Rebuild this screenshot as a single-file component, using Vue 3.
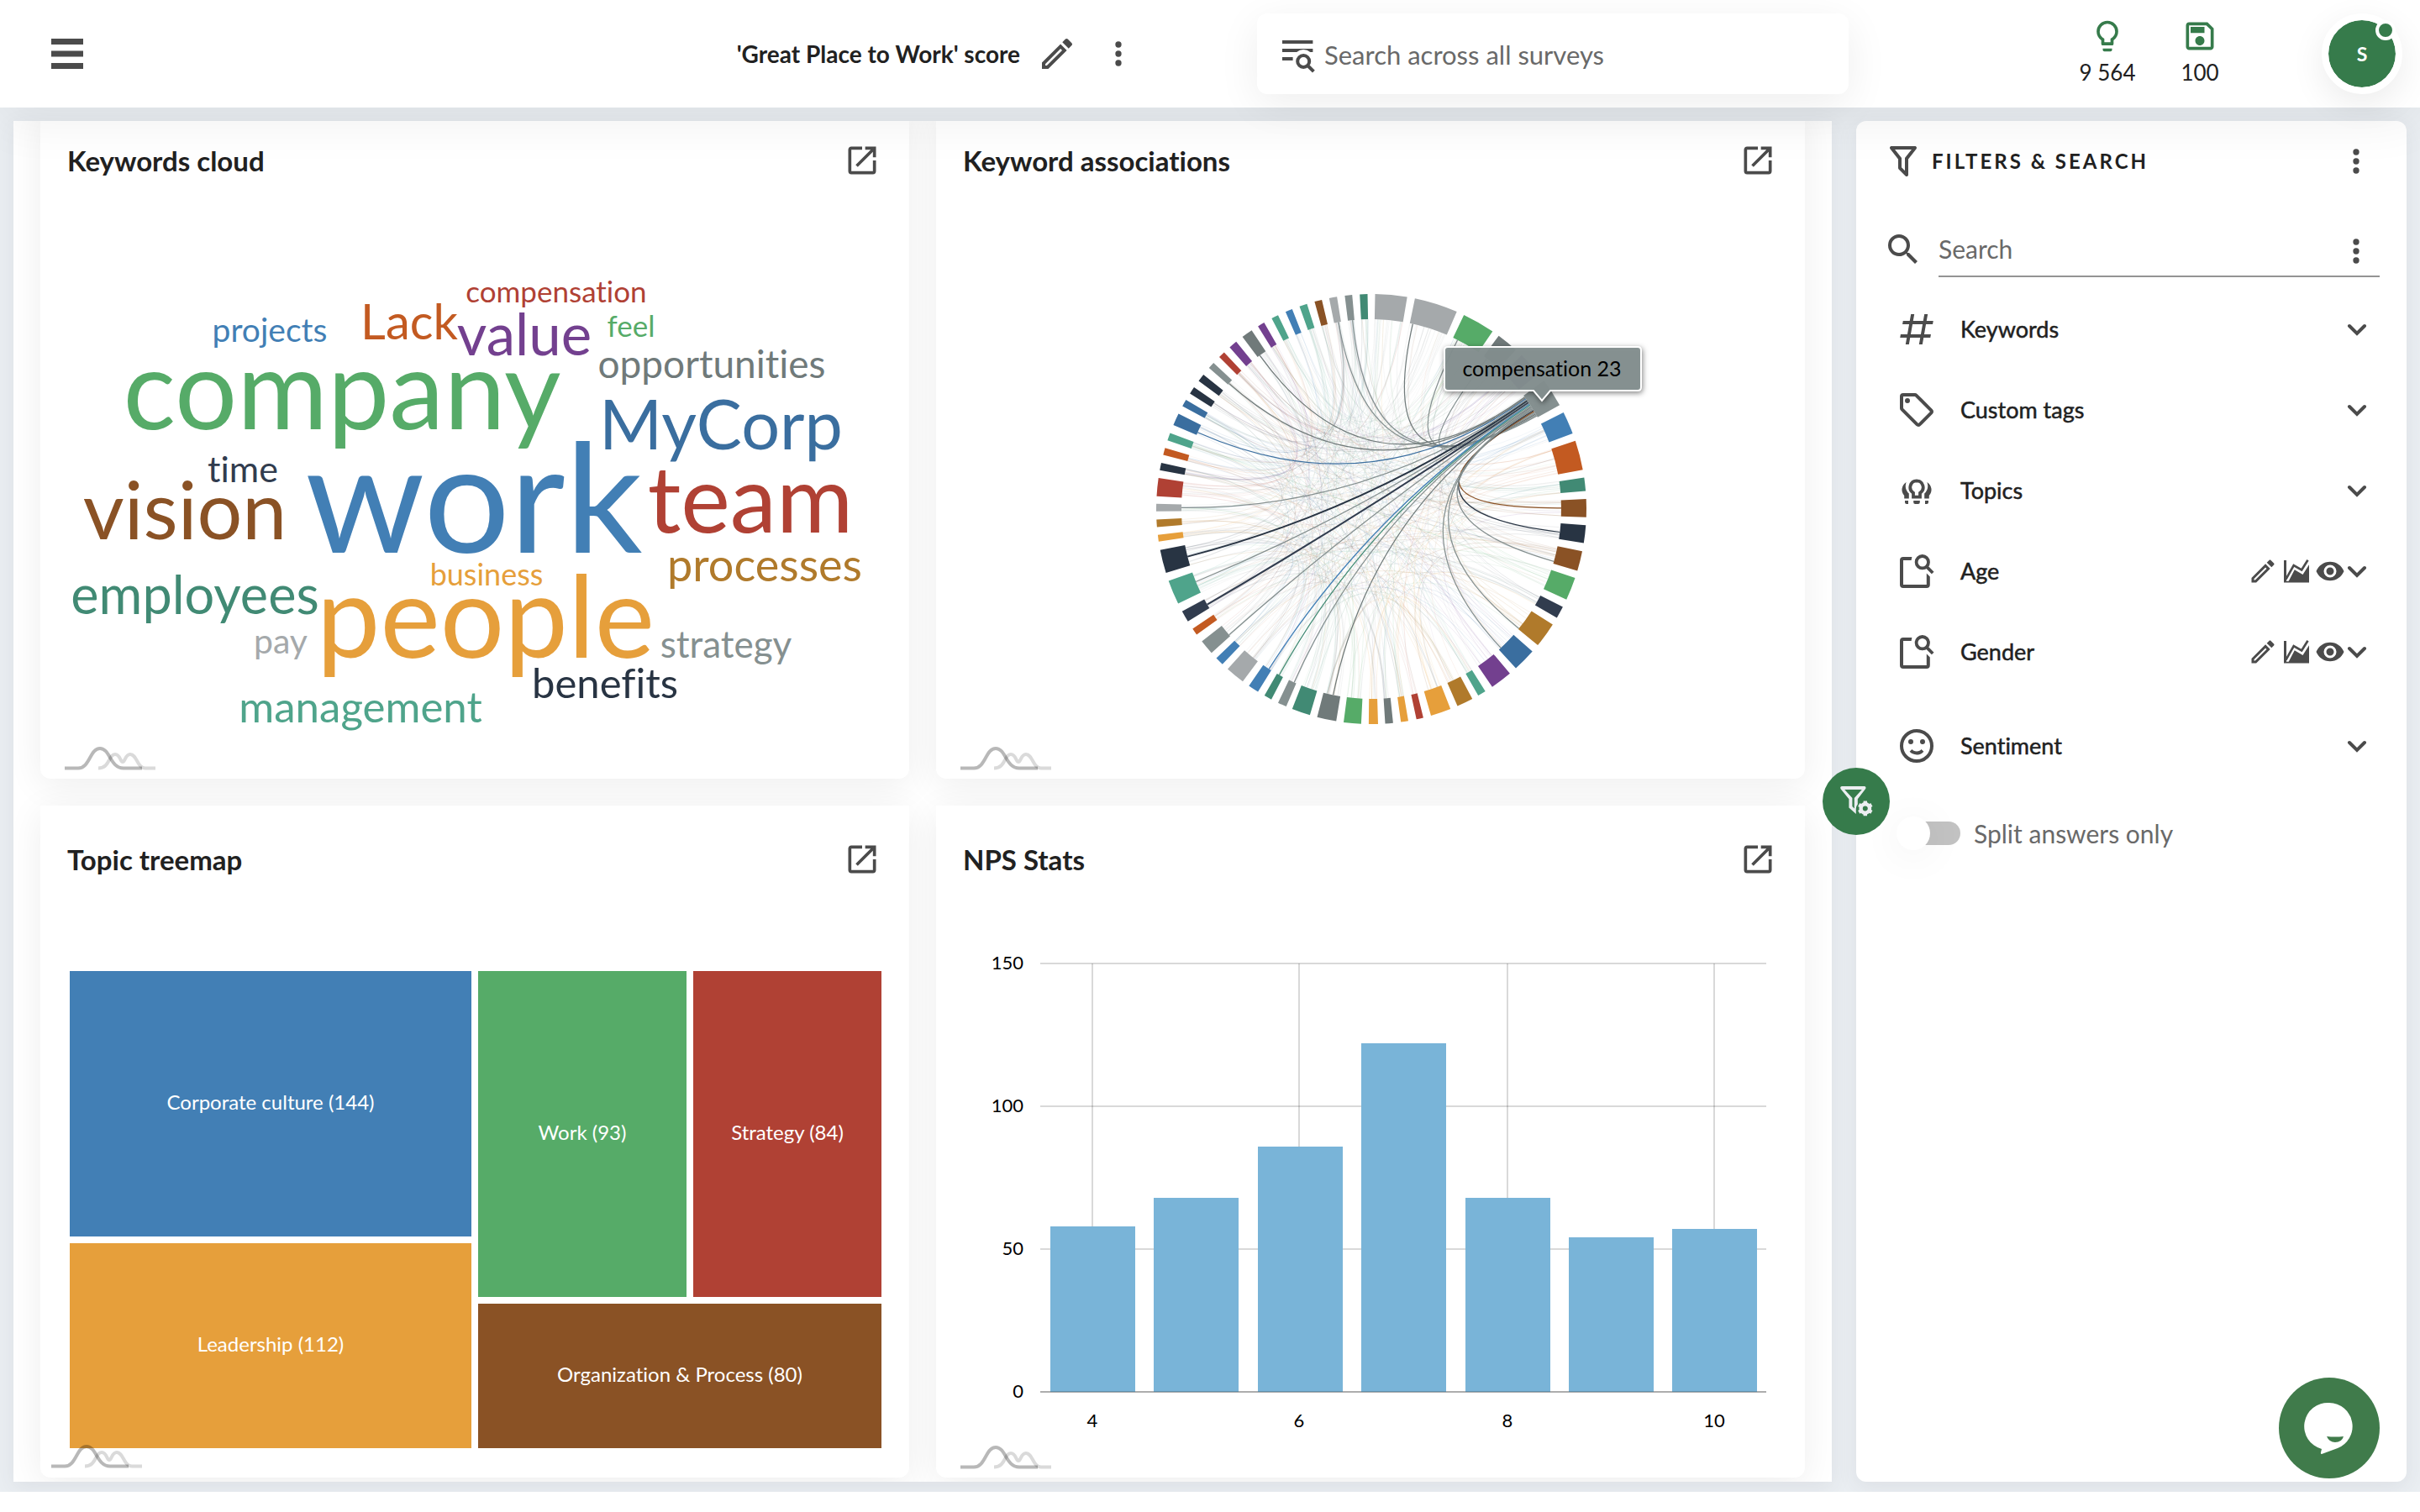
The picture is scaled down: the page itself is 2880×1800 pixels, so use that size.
<script setup>
import { h, ref } from 'vue'

const shapes = {
  menu: [['M2.500 3h19v3.500h-19zM2.500 10.250h19v3.500h-19zM2.500 17.500h19v3.500h-19z']],
  pencil: [['M14.06,9L15,9.94L5.92,19H5V18.08L14.06,9M17.66,3C17.41,3 17.15,3.1 16.96,3.29L15.13,5.12L18.88,8.87L20.71,7.04C21.1,6.65 21.1,6 20.71,5.63L18.37,3.29C18.17,3.09 17.92,3 17.66,3M14.06,6.19L3,17.25V21H6.75L17.81,9.94L14.06,6.19Z']],
  dots: [['M12 4a2 2 0 1 1 0 4a2 2 0 1 1 0-4M12 10a2 2 0 1 1 0 4a2 2 0 1 1 0-4M12 16a2 2 0 1 1 0 4a2 2 0 1 1 0-4']],
  textSearch: [
    ['M3 4h18.2v2H3zM3 9h18.2v2h-1.6a6 6 0 0 0-8 0H3zM3 14h6.3v2H3z'],
    ['M15.6 13a3.5 3.5 0 1 1 0 7a3.5 3.5 0 1 1 0-7M18.1 19l3.6 3.6', 2]
  ],
  bulb: [['M12,2A7,7 0 0,1 19,9C19,11.38 17.81,13.47 16,14.74V17A1,1 0 0,1 15,18H9A1,1 0 0,1 8,17V14.74C6.19,13.47 5,11.38 5,9A7,7 0 0,1 12,2M9,21V20H15V21A1,1 0 0,1 14,22H10A1,1 0 0,1 9,21M12,4A5,5 0 0,0 7,9C7,11.05 8.23,12.81 10,13.58V16H14V13.58C15.77,12.81 17,11.05 17,9A5,5 0 0,0 12,4Z']],
  save: [['M17 3H5C3.89 3 3 3.9 3 5V19C3 20.1 3.89 21 5 21H19C20.1 21 21 20.1 21 19V7L17 3M19 19H5V5H16.17L19 7.83V19M12 12C10.34 12 9 13.34 9 15S10.34 18 12 18 15 16.66 15 15 13.66 12 12 12M6 6H15V10H6V6Z']],
  open: [['M14,3V5H17.59L7.76,14.83L9.17,16.24L19,6.41V10H21V3M19,19H5V5H12V3H5C3.89,3 3,3.9 3,5V19A2,2 0 0,0 5,21H19A2,2 0 0,0 21,19V12H19V19Z']],
  filter: [['M15,19.88C15.04,20.18 14.94,20.5 14.71,20.71C14.32,21.1 13.69,21.1 13.3,20.71L9.29,16.7C9.06,16.47 8.96,16.16 9,15.87V10.75L4.21,4.62C3.87,4.19 3.95,3.56 4.38,3.22C4.57,3.08 4.78,3 5,3H19C19.22,3 19.43,3.08 19.62,3.22C20.05,3.56 20.13,4.19 19.79,4.62L15,10.75V19.88M7.04,5L11,10.06V15.58L13,17.58V10.05L16.96,5H7.04Z']],
  magnify: [['M9.5,3A6.5,6.5 0 0,1 16,9.5C16,11.11 15.41,12.59 14.44,13.73L14.71,14H15.5L20.5,19L19,20.5L14,15.5V14.71L13.73,14.44C12.59,15.41 11.11,16 9.5,16A6.5,6.5 0 0,1 3,9.5A6.5,6.5 0 0,1 9.5,3M9.5,5C7,5 5,7 5,9.5C5,12 7,14 9.5,14C12,14 14,12 14,9.5C14,7 12,5 9.5,5Z']],
  pound: [['M5.41,21L6.12,17H2.12L2.47,15H6.47L7.53,9H3.53L3.88,7H7.88L8.59,3H10.59L9.88,7H15.88L16.59,3H18.59L17.88,7H21.88L21.53,9H17.53L16.47,15H20.47L20.12,17H16.12L15.41,21H13.41L14.12,17H8.12L7.41,21H5.41M9.53,9L8.47,15H14.47L15.53,9H9.53Z']],
  tag: [['M21.41 11.58L12.41 2.58A2 2 0 0 0 11 2H4A2 2 0 0 0 2 4V11A2 2 0 0 0 2.59 12.42L11.59 21.42A2 2 0 0 0 13 22A2 2 0 0 0 14.41 21.41L21.41 14.41A2 2 0 0 0 22 13A2 2 0 0 0 21.41 11.58M13 20L4 11V4H11L20 13M6.5 5A1.5 1.5 0 1 1 5 6.5A1.5 1.5 0 0 1 6.5 5Z']],
  topics: [
    ['M10.1 18h3.8v1a1 1 0 0 1-1 1h-1.8a1 1 0 0 1-1-1zM5 18h2v2H6a1 1 0 0 1-1-1zM17 18h2v1a1 1 0 0 1-1 1h-1zM5.800 7A5.200 5.200 0 0 0 4.600 15v1.700H7.400v-2.900A6.500 6.500 0 0 1 5.800 7M18.200 7a6.500 6.500 0 0 1-1.600 6.800v2.900h2.800V15A5.200 5.200 0 0 0 18.200 7'],
    ['M12 6.2a3.9 3.9 0 0 1 2 7.2v2.4h-4v-2.4a3.9 3.9 0 0 1 2-7.2z', 1.9]
  ],
  field: [
    ['M9.2 3.500H4A2 2 0 0 0 2 5.500V20A2 2 0 0 0 4 22H17.9A2 2 0 0 0 19.9 20V15.3L17.9 13.3V20H4V5.500H8.8z'],
    ['M15.4 3a3.6 3.6 0 1 1 0 7.2a3.6 3.6 0 1 1 0-7.2M17.8 9.2l3.8 3.8', 1.9]
  ],
  smile: [
    ['M8.5 8a1.5 1.5 0 1 1 0 3a1.5 1.5 0 1 1 0-3M15.5 8a1.5 1.5 0 1 1 0 3a1.5 1.5 0 1 1 0-3M12,17.23C10.25,17.23 8.71,16.5 7.81,15.42L9.23,14C9.68,14.72 10.75,15.23 12,15.23C13.25,15.23 14.32,14.72 14.77,14L16.19,15.42C15.29,16.5 13.75,17.23 12,17.23Z'],
    ['M12 3a9 9 0 1 1 0 18a9 9 0 1 1 0-18', 2]
  ],
  area: [
    ['M2 3.4h2V21H2zM4 21v-1.2h1.8L10.5 10.8L17 14.6L22 6.8V21z'],
    ['M3.6 18.400L9.8 7.4L16.1 11L21 3.2', 1.8]
  ],
  eye: [['M12,9A3,3 0 0,0 9,12A3,3 0 0,0 12,15A3,3 0 0,0 15,12A3,3 0 0,0 12,9M12,17A5,5 0 0,1 7,12A5,5 0 0,1 12,7A5,5 0 0,1 17,12A5,5 0 0,1 12,17M12,4.5C7,4.5 2.73,7.61 1,12C2.73,16.39 7,19.5 12,19.5C17,19.5 21.27,16.39 23,12C21.27,7.61 17,4.5 12,4.5Z']],
  filterCog: [
    ['M3.6 3h13.2c.9 0 1.2.9.8 1.5L12.9 10.6v3.2c-.8 1-1 2-1 3.2v2.5L7.7 15.7v-5.1L2.8 4.6C2.3 3.9 2.7 3 3.6 3M5.1 5l4.6 5v5l1.2 1.3V10l4.5-5z'],
    ['M17.4 13.6a2.6 2.6 0 1 1 0 5.2a2.6 2.6 0 1 1 0-5.2', 2.2],
    ['M17.4 11.800v1.400M17.4 19.200v1.400M13.600 14l1.200.7M20 17.700l1.200.7M13.600 18.400l1.200-.7M20 14.700l1.200-.7', 2.2]
  ]
}

const Icon = (props) =>
  h('svg', { viewBox: '0 0 24 24', 'aria-hidden': 'true' },
    shapes[props.name].map(([d, w]) =>
      h('path', w ? { d, fill: 'none', stroke: 'currentColor', 'stroke-width': w } : { d, fill: 'currentColor' })))
Icon.props = ['name']

const words = [
  ['compensation', 662, 360, 35, '#b04134'],
  ['Lack', 487, 404, 58, '#c35a21'],
  ['value', 624, 423, 69, '#73408f'],
  ['feel', 751, 401, 35, '#56ab68'],
  ['projects', 321, 407, 39, '#427fb5'],
  ['opportunities', 847, 450, 46, '#707a7a'],
  ['company', 407, 511, 131, '#56ab68'],
  ['MyCorp', 858, 535, 81, '#3a6e9f'],
  ['time', 289, 574, 43, '#313c4e'],
  ['vision', 220, 642, 95, '#8a5225'],
  ['work', 564, 658, 181, '#427fb5'],
  ['team', 893, 634, 111, '#b04134'],
  ['business', 579, 697, 36, '#e69f3b'],
  ['processes', 910, 692, 54, '#b07a2b'],
  ['employees', 232, 731, 63, '#418a74'],
  ['people', 578, 783, 135, '#e69f3b'],
  ['pay', 334, 778, 41, '#a5a9ab'],
  ['strategy', 864, 783, 44, '#859090'],
  ['benefits', 720, 831, 49, '#283443'],
  ['management', 429, 860, 51, '#4fa48b']
]

const palette = {
  l: '#a5a9ab', g: '#56ab68', d: '#707a7a', p: '#73408f', y: '#859090', b: '#427fb5', o: '#c35a21',
  t: '#418a74', n: '#8a5225', k: '#283443', v: '#313c4e', c: '#b07a2b', u: '#3a6e9f', m: '#4fa48b',
  e: '#e69f3b', r: '#b04134'
}
// colour key, start and end angle in degrees, clockwise from the top
const segments = [
  ['l', 1, 9.6], ['l', 11.7, 23.4], ['g', 25.5, 34.3], ['d', 36.3, 42.2], ['p', 44.3, 51], ['y', 53.3, 61.1],
  ['b', 63.3, 69.4], ['o', 71.5, 79.5], ['t', 81.6, 85.2], ['n', 87.3, 92.2], ['k', 94.3, 99.1],
  ['n', 101.3, 106.7], ['g', 108.7, 114.9], ['v', 117.1, 120.4], ['c', 122.5, 129.3], ['u', 131.5, 137.8],
  ['p', 139.9, 145.8], ['m', 148, 150.2], ['c', 152, 156.4], ['e', 158.4, 163.9], ['r', 166, 167.9],
  ['e', 170.1, 172.1], ['d', 174.2, 176.3], ['e', 178.2, 180.7], ['g', 182.7, 187.4], ['d', 189.4, 194.6],
  ['t', 196.6, 201.6], ['y', 203.3, 205.7], ['t', 207.7, 209.8], ['b', 211.8, 214.7], ['l', 216.7, 221.9],
  ['b', 223.8, 226.1], ['y', 228, 232], ['o', 234.3, 236.2], ['v', 238.5, 241.6], ['m', 243.9, 250.5],
  ['k', 252.7, 259], ['e', 261.3, 263.1], ['c', 265.2, 267.2], ['l', 269.4, 271.4], ['r', 273.4, 278.3],
  ['k', 280.4, 282.4], ['o', 284.6, 286.5], ['m', 288.6, 290.7], ['u', 293, 296.3], ['u', 298.6, 300.5],
  ['k', 302.5, 304.5], ['k', 306.6, 308.7], ['y', 311, 312.8], ['r', 315, 316.8], ['p', 318.8, 321.1],
  ['d', 323.2, 326.2], ['p', 328.2, 330.1], ['m', 332.4, 334.3], ['b', 336.5, 338.4], ['m', 340.5, 342.6],
  ['n', 344.7, 346.7], ['l', 348.7, 350.8], ['y', 352.9, 354.9], ['t', 356.9, 359]
]
const centre = [1632, 606]
const outer = 256
const inner = 226
const at = (deg, r) => {
  const a = (deg * Math.PI) / 180
  return `${(centre[0] + r * Math.sin(a)).toFixed(1)} ${(centre[1] - r * Math.cos(a)).toFixed(1)}`
}
const arcs = segments.map(([key, a, b]) => ({
  fill: palette[key],
  d: `M${at(a, outer)}A${outer} ${outer} 0 0 1 ${at(b, outer)}L${at(b, inner)}A${inner} ${inner} 0 0 0 ${at(a, inner)}Z`
}))
const link = (a, b) => `M${at(a, inner)}Q${centre[0]} ${centre[1]} ${at(b, inner)}`

let seed = 11
const random = () => {
  seed = (seed * 16807) % 2147483647
  return seed / 2147483647
}
const faint = []
segments.forEach(([key, a, b], i) => {
  const count = Math.round((b - a) * 1.4) + 1
  for (let n = 0; n < count; n++) {
    const j = (i + 5 + Math.floor(random() * (segments.length - 10))) % segments.length
    const [, c, e] = segments[j]
    faint.push({
      stroke: palette[key],
      opacity: 0.05 + random() * 0.09,
      d: link(a + (b - a) * random(), c + (e - c) * random())
    })
  }
})
const strong = [
  ['y', 350], ['y', 354.3], ['d', 12.6], ['y', 27], ['y', 37.5], ['n', 89.7], ['k', 97], ['y', 106],
  ['y', 129], ['y', 137], ['d', 191.6], ['y', 204], ['t', 209], ['b', 212.6], ['y', 228.5],
  ['v', 239.8, 2], ['y', 247.5], ['k', 255.5, 2], ['y', 270.4], ['u', 293.8], ['d', 311.4], ['d', 324]
].map(([key, deg, w], i) => ({ stroke: palette[key], w: w || 1.25, d: link(60.6 - i * 0.32, deg) }))

const yTicks = [[150, 1147], [100, 1317], [50, 1487], [0, 1657]]
const xTicks = [[4, 1300], [6, 1546], [8, 1794], [10, 2040]]
const bars = [58, 68, 86, 122, 68, 54, 57].map((value, i) => ({
  x: 1250 + Math.round(i * 123.4),
  y: 1657 - Math.round(value * 3.4),
  height: Math.round(value * 3.4)
}))

const filters = [
  { icon: 'pound', label: 'Keywords' },
  { icon: 'tag', label: 'Custom tags' },
  { icon: 'topics', label: 'Topics' },
  { icon: 'field', label: 'Age', editable: true },
  { icon: 'field', label: 'Gender', editable: true },
  { icon: 'smile', label: 'Sentiment', spaced: true }
]
const surveyQuery = ref('')
const filterQuery = ref('')
const split = ref(false)
</script>

<template>
  <div class="page">
    <header class="topbar">
      <button class="icon-btn" aria-label="Menu"><Icon name="menu" class="i48" /></button>
      <h1 class="survey-title">'Great Place to Work' score</h1>
      <button class="icon-btn" aria-label="Rename"><Icon name="pencil" class="i48" /></button>
      <button class="icon-btn more" aria-label="Survey options"><Icon name="dots" class="i44" /></button>
      <label class="survey-search">
        <Icon name="textSearch" class="i48" />
        <input v-model="surveyQuery" type="text" placeholder="Search across all surveys" aria-label="Search across all surveys" />
      </label>
      <div class="counter"><Icon name="bulb" class="i48" /><span>9 564</span></div>
      <div class="counter"><Icon name="save" class="i48" /><span>100</span></div>
      <button class="avatar">S<span class="badge"></span></button>
    </header>

    <div class="body">
      <main class="board">
        <div class="cards">
          <section class="card">
            <header class="card-head">
              <h2>Keywords cloud</h2>
              <button class="icon-btn" aria-label="Open keywords cloud"><Icon name="open" class="i44" /></button>
            </header>
            <svg class="chart" viewBox="48 255 1034 672">
              <text v-for="[word, x, y, size, fill] in words" :key="word" :x="x" :y="y" :font-size="size" :fill="fill" text-anchor="middle">{{ word }}</text>
              <g transform="translate(77 889)" fill="none" stroke-width="4">
                <path class="logo-light" d="M40 25.500C54 25.500 52 9 60 9C66 9 66 18 69 18C72 18 72 9 78 9C86 9 86 25.500 96 25.500H108" />
                <path class="logo-dark" d="M0 25.500H16C30 25.500 30 2 42 2C54 2 54 25.500 70 25.500H92" />
              </g>
            </svg>
          </section>

          <section class="card">
            <header class="card-head">
              <h2>Keyword associations</h2>
              <button class="icon-btn" aria-label="Open keyword associations"><Icon name="open" class="i44" /></button>
            </header>
            <svg class="chart" viewBox="1114 255 1034 672">
              <g fill="none">
                <path v-for="(c, i) in faint" :key="i" :d="c.d" :stroke="c.stroke" :stroke-opacity="c.opacity" />
              </g>
              <g fill="none">
                <path v-for="(c, i) in strong" :key="i" :d="c.d" :stroke="c.stroke" :stroke-width="c.w" />
              </g>
              <path v-for="(a, i) in arcs" :key="i" :d="a.d" :fill="a.fill" />
              <path class="tip" d="M1723 413H1949Q1953 413 1953 417V461Q1953 465 1949 465H1845L1835 477L1825 465H1723Q1719 465 1719 461V417Q1719 413 1723 413Z" />
              <text class="tip-text" x="1835" y="448" text-anchor="middle">compensation 23</text>
              <g transform="translate(1143 889)" fill="none" stroke-width="4">
                <path class="logo-light" d="M40 25.500C54 25.500 52 9 60 9C66 9 66 18 69 18C72 18 72 9 78 9C86 9 86 25.500 96 25.500H108" />
                <path class="logo-dark" d="M0 25.500H16C30 25.500 30 2 42 2C54 2 54 25.500 70 25.500H92" />
              </g>
            </svg>
          </section>

          <section class="card">
            <header class="card-head">
              <h2>Topic treemap</h2>
              <button class="icon-btn" aria-label="Open topic treemap"><Icon name="open" class="i44" /></button>
            </header>
            <div class="treemap">
              <div class="tree-left">
                <div class="tile culture">Corporate culture (144)</div>
                <div class="tile leadership">Leadership (112)</div>
              </div>
              <div class="tree-right">
                <div class="tile work">Work (93)</div>
                <div class="tile strategy">Strategy (84)</div>
                <div class="tile process">Organization &amp; Process (80)</div>
              </div>
              <svg class="tree-logo" viewBox="0 0 108 28" fill="none" stroke-width="4">
                <path class="logo-light" d="M40 25.500C54 25.500 52 9 60 9C66 9 66 18 69 18C72 18 72 9 78 9C86 9 86 25.500 96 25.500H108" />
                <path class="logo-dark" d="M0 25.500H16C30 25.500 30 2 42 2C54 2 54 25.500 70 25.500H92" />
              </svg>
            </div>
          </section>

          <section class="card">
            <header class="card-head">
              <h2>NPS Stats</h2>
              <button class="icon-btn" aria-label="Open NPS stats"><Icon name="open" class="i44" /></button>
            </header>
            <svg class="chart" viewBox="1114 1087 1034 672">
              <g class="grid-lines">
                <path v-for="[v, y] in yTicks" :key="v" :d="`M1238 ${y}H2102`" />
                <path v-for="[v, x] in xTicks" :key="v" :d="`M${x} 1147V1657`" />
              </g>
              <rect v-for="bar in bars" :key="bar.x" class="bar" :x="bar.x" :y="bar.y" width="101" :height="bar.height" />
              <path class="axis" d="M1238 1657H2102" />
              <g class="ticks">
                <text v-for="[v, y] in yTicks" :key="v" x="1218" :y="y + 7" text-anchor="end">{{ v }}</text>
                <text v-for="[v, x] in xTicks" :key="v" :x="x" y="1699" text-anchor="middle">{{ v }}</text>
              </g>
              <g transform="translate(1143 1721)" fill="none" stroke-width="4">
                <path class="logo-light" d="M40 25.500C54 25.500 52 9 60 9C66 9 66 18 69 18C72 18 72 9 78 9C86 9 86 25.500 96 25.500H108" />
                <path class="logo-dark" d="M0 25.500H16C30 25.500 30 2 42 2C54 2 54 25.500 70 25.500H92" />
              </g>
            </svg>
          </section>
        </div>
      </main>

      <aside class="panel">
        <div class="panel-head">
          <Icon name="filter" class="i48" />
          <h2>FILTERS &amp; SEARCH</h2>
          <button class="icon-btn" aria-label="Filter options"><Icon name="dots" class="i44" /></button>
        </div>
        <div class="panel-search">
          <Icon name="magnify" class="i48" />
          <div class="search-line">
            <input v-model="filterQuery" type="text" placeholder="Search" aria-label="Search" />
            <button class="icon-btn" aria-label="Search options"><Icon name="dots" class="i44" /></button>
          </div>
        </div>
        <ul class="filters">
          <li v-for="f in filters" :key="f.label" :class="{ spaced: f.spaced }">
            <Icon :name="f.icon" class="i48" />
            <span class="filter-label">{{ f.label }}</span>
            <template v-if="f.editable">
              <button class="icon-btn small" :aria-label="`Edit ${f.label}`"><Icon name="pencil" class="i36" /></button>
              <button class="icon-btn small" :aria-label="`Chart ${f.label}`"><Icon name="area" class="i36" /></button>
              <button class="icon-btn" :aria-label="`Show ${f.label}`"><Icon name="eye" class="i36" /></button>
            </template>
            <button class="icon-btn" :aria-label="`Expand ${f.label}`">
              <svg class="chevron" viewBox="0 0 28 28"><path d="M5 10l9 9l9-9" /></svg>
            </button>
          </li>
        </ul>
        <label class="switch">
          <input v-model="split" type="checkbox" />
          <span>Split answers only</span>
        </label>
        <button class="panel-toggle" aria-label="Toggle filters"><Icon name="filterCog" class="i48" /></button>
        <button class="chat" aria-label="Open chat">
          <svg viewBox="0 0 120 120">
            <path fill="#fff" d="M60 30A28 28 0 0 1 70 84L51 91Q49.500 91 50 89L51 85A28 28 0 0 1 60 30Z" />
            <path fill="#407b4b" d="M57 70Q67 71 77 70Q75 77 67 77Q60 77 57 70Z" />
          </svg>
        </button>
      </aside>
    </div>
  </div>
</template>

<style>
body {
  margin: 0;
  background: #fff;
}
</style>

<style scoped>
.page {
  font-family: Lato, 'Open Sans', sans-serif;
  font-variant-ligatures: none;
  color: #212121;
  background: #eaeef2;
}
h1,
h2 {
  margin: 0;
  font-weight: 700;
}
button {
  padding: 0;
  border: 0;
  background: none;
  color: inherit;
  font-family: inherit;
}
input {
  border: 0;
  padding: 0;
  outline: 0;
  background: none;
  font-family: inherit;
  color: #212121;
}
input::placeholder {
  color: #696969;
  opacity: 1;
}
.icon-btn {
  display: flex;
  color: #4b4b4b;
}
.i36 {
  width: 36px;
  height: 36px;
}
.i44 {
  width: 44px;
  height: 44px;
}
.i48 {
  width: 48px;
  height: 48px;
  color: #4b4b4b;
}
.topbar {
  position: relative;
  z-index: 2;
  display: flex;
  align-items: center;
  height: 128px;
  padding: 0 21px 0 56px;
  background: #fff;
  box-shadow: 0 18px 60px rgba(0, 0, 0, 0.06);
}
.survey-title {
  margin-left: auto;
  margin-right: 20px;
  font-size: 28px;
  line-height: 36px;
}
.more {
  margin-left: 27px;
}
.survey-search {
  display: flex;
  align-items: center;
  gap: 8px;
  box-sizing: border-box;
  width: 704px;
  height: 96px;
  margin: 0 253px 0 143px;
  padding: 0 24px;
  border-radius: 12px;
  background: #fff;
  box-shadow: 0 12px 50px rgba(0, 0, 0, 0.07);
}
.survey-search input {
  flex: 1;
  padding-top: 2px;
  font-size: 31px;
  line-height: 40px;
}
.counter {
  display: flex;
  flex-direction: column;
  align-items: center;
  width: 110px;
  height: 86px;
  font-size: 26px;
  line-height: 42px;
}
.counter .i48 {
  color: #367b4b;
}
.avatar {
  position: relative;
  box-sizing: border-box;
  width: 96px;
  height: 96px;
  margin-left: 90px;
  border: 8px solid #fff;
  border-radius: 50%;
  background: #367b4b;
  background-clip: padding-box;
  box-shadow: 0 12px 40px rgba(0, 0, 0, 0.08);
  color: #fff;
  font-size: 23px;
  font-weight: 700;
}
.badge {
  position: absolute;
  top: 0;
  right: 0;
  width: 16px;
  height: 16px;
  border: 4px solid #fff;
  border-radius: 50%;
  background: #367b4b;
}
.body {
  display: grid;
  grid-template-columns: minmax(0, 1fr) 655px;
  gap: 29px;
  padding: 16px 16px 12px;
}
.board {
  overflow: hidden;
  padding: 0 32px 5px;
  background: #fff;
}
.board,
.panel {
  box-shadow: 0 6px 24px rgba(60, 70, 80, 0.08);
}
.cards {
  display: grid;
  grid-template-columns: repeat(2, minmax(0, 1fr));
  gap: 32px;
  margin-top: -17px;
}
.card {
  display: flex;
  flex-direction: column;
  border-radius: 0 0 12px 12px;
  background: #fff;
  box-shadow: 0 8px 44px rgba(0, 0, 0, 0.07);
}
.card-head {
  display: flex;
  align-items: center;
  justify-content: space-between;
  height: 128px;
  padding: 0 34px 0 32px;
}
.card-head h2 {
  font-size: 33px;
  line-height: 40px;
}
.chart {
  display: block;
  width: 100%;
}
.logo-light {
  stroke: #dadada;
}
.logo-dark {
  stroke: #000;
  stroke-opacity: 0.28;
}
.tip {
  fill: #859090;
  fill-opacity: 0.95;
  stroke: #fff;
  stroke-width: 2;
  filter: drop-shadow(1px 2px 3px rgba(0, 0, 0, 0.5));
}
.tip-text {
  fill: #000;
  font-size: 25px;
}
.treemap {
  position: relative;
  flex: 1;
  display: grid;
  grid-template-columns: 478fr 480fr;
  gap: 8px;
  margin: 69px 33px 35px 35px;
}
.tree-left {
  display: grid;
  grid-template-rows: 316fr 244fr;
  gap: 8px;
}
.tree-right {
  display: grid;
  grid-template-columns: 248fr 224fr;
  grid-template-rows: 388fr 172fr;
  gap: 8px;
}
.tile {
  display: flex;
  align-items: center;
  justify-content: center;
  padding-bottom: 4px;
  color: #fff;
  font-size: 24px;
  line-height: 30px;
}
.culture {
  background: #427fb5;
}
.leadership {
  background: #e69f3b;
}
.work {
  background: #56ab68;
}
.strategy {
  background: #b04134;
}
.process {
  grid-column: 1 / 3;
  background: #8a5225;
}
.tree-logo {
  position: absolute;
  left: -22px;
  bottom: -24px;
  width: 108px;
  height: 28px;
}
.grid-lines {
  stroke: #000;
  stroke-opacity: 0.15;
  stroke-width: 2;
}
.bar {
  fill: #79b4d8;
}
.axis {
  stroke: #000;
  stroke-opacity: 0.2;
  stroke-width: 2;
}
.ticks {
  fill: #000;
  font-size: 22px;
}
.panel {
  position: relative;
  border-radius: 12px;
  background: #fff;
}
.panel-head {
  display: flex;
  align-items: center;
  height: 96px;
  padding: 0 38px 0 32px;
}
.panel-head h2 {
  flex: 1;
  margin-left: 10px;
  font-size: 24px;
  line-height: 32px;
  letter-spacing: 3px;
}
.panel-search {
  display: flex;
  align-items: center;
  gap: 18px;
  margin: 24px 32px 14px;
}
.search-line {
  flex: 1;
  display: flex;
  align-items: center;
  height: 64px;
  padding-right: 6px;
  border-bottom: 2px solid #949494;
}
.search-line input {
  flex: 1;
  font-size: 30px;
  line-height: 40px;
}
.search-line .icon-btn {
  margin-top: 6px;
}
.filters {
  margin: 0;
  padding: 0;
  list-style: none;
}
.filters li {
  display: flex;
  align-items: center;
  height: 96px;
  padding: 0 45px 0 48px;
}
.filters li.spaced {
  margin-top: 16px;
}
.filter-label {
  flex: 1;
  margin-left: 28px;
  font-size: 27px;
  line-height: 36px;
  -webkit-text-stroke: 0.5px #212121;
}
.small {
  margin-right: 4px;
}
.chevron {
  width: 28px;
  height: 28px;
  fill: none;
  stroke: #4b4b4b;
  stroke-width: 4;
  stroke-linecap: round;
}
.switch {
  display: flex;
  align-items: center;
  gap: 16px;
  height: 96px;
  margin-top: 8px;
  padding-left: 48px;
  color: #696969;
  font-size: 30px;
  line-height: 40px;
}
.switch input {
  position: relative;
  appearance: none;
  width: 76px;
  height: 28px;
  margin: 0;
  border-radius: 14px;
  background: linear-gradient(90deg, #fff 20px, #c2c2c2 20px);
}
.switch input::before {
  content: '';
  position: absolute;
  left: 0;
  top: -6px;
  width: 40px;
  height: 40px;
  border-radius: 50%;
  background: #fff;
  box-shadow: 0 6px 50px rgba(0, 0, 0, 0.07);
}
.panel-toggle {
  position: absolute;
  left: -40px;
  top: 770px;
  display: flex;
  align-items: center;
  justify-content: center;
  width: 80px;
  height: 80px;
  border-radius: 50%;
  background: #367b4b;
}
.panel-toggle .i48 {
  color: #eceef1;
}
.chat {
  position: absolute;
  right: 32px;
  bottom: 4px;
  width: 120px;
  height: 120px;
  border-radius: 50%;
  background: #407b4b;
}
</style>
